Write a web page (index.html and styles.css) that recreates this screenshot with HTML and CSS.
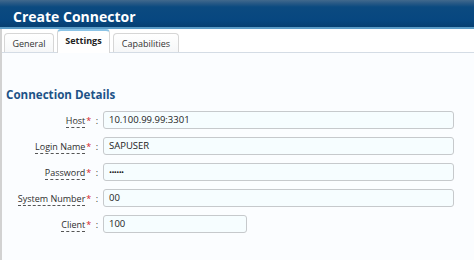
FILE: index.html
```html
<!DOCTYPE html>
<html>
<head>
<meta charset="utf-8">
<link rel="stylesheet" href="styles.css">
</head>
<body>
<div class="dialog">
  <div class="titlebar">Create Connector</div>
  <div class="body">
    <div class="tabs">
      <div class="tab">General</div>
      <div class="tab active">Settings</div>
      <div class="tab">Capabilities</div>
    </div>
    <div class="content">
      <h2 class="section">Connection Details</h2>
      <div class="form">
        <div class="row">
          <div class="label"><span class="lt">Host</span><span class="req">*</span> :</div>
          <div class="input">10.100.99.99:3301</div>
        </div>
        <div class="row">
          <div class="label"><span class="lt">Login Name</span><span class="req">*</span> :</div>
          <div class="input">SAPUSER</div>
        </div>
        <div class="row">
          <div class="label"><span class="lt">Password</span><span class="req">*</span> :</div>
          <div class="input pw">••••••</div>
        </div>
        <div class="row">
          <div class="label"><span class="lt">System Number</span><span class="req">*</span> :</div>
          <div class="input">00</div>
        </div>
        <div class="row">
          <div class="label"><span class="lt">Client</span><span class="req">*</span> :</div>
          <div class="input short">100</div>
        </div>
      </div>
    </div>
  </div>
</div>
</body>
</html>
```
FILE: styles.css
```css
html, body {
  margin: 0;
  padding: 0;
  background: #ffffff;
}
body {
  font-family: "Open Sans", "Noto Sans", sans-serif;
  width: 474px;
  height: 260px;
  overflow: hidden;
}
.dialog {
  display: flex;
  flex-direction: column;
  height: 260px;
}
.titlebar {
  height: 29px;
  box-sizing: border-box;
  padding: 7px 0 0 13px;
  color: #ffffff;
  font-size: 14px;
  font-weight: 700;
  line-height: 19px;
  background: linear-gradient(to bottom, #41698d 0px, #2a5a86 3px, #0b4a80 7px, #074780 20px, #063d6d 29px);
  border-bottom: 2px solid #5b9cc6;
}
.body {
  flex: 1;
  border-left: 2px solid #d2d2d2;
  background: #fbfdff;
  display: flex;
  flex-direction: column;
}
.tabs {
  display: flex;
  align-items: flex-end;
  gap: 3px;
  padding: 0 0 0 2px;
  height: 23px;
  background: #ffffff;
  border-bottom: 1px solid #d4dce5;
}
.tab {
  height: 19px;
  box-sizing: border-box;
  padding: 2px 0 0 0;
  text-align: center;
  font-size: 9px;
  line-height: 16px;
  color: #333333;
  border: 1px solid #d6d6d6;
  border-bottom: none;
  border-radius: 4px 4px 0 0;
  background: linear-gradient(#ffffff, #f6f7f8);
}
.tab:first-child { width: 50px; }
.tab.active {
  font-weight: 700;
  color: #222222;
  padding-top: 2px;
  border-top: 2px solid #8cc4e6;
  background: #ffffff;
  margin-bottom: -1px;
  height: 24px;
  width: 53px;
}
.tab:last-child { width: 66px; }
.content {
  padding: 34px 0 0 4px;
}
.section {
  margin: 0 0 8px 0;
  font-size: 11.6px;
  font-weight: 700;
  line-height: 16px;
  color: #1e5387;
}
.form {
  display: flex;
  flex-direction: column;
  gap: 8px;
}
.row {
  display: flex;
  align-items: center;
  gap: 5px;
}
.label {
  width: 92px;
  text-align: right;
  font-size: 9px;
  color: #2e2e2e;
  white-space: nowrap;
}
.lt {
  border-bottom: 1px dashed #555555;
}
.req {
  color: #d3232a;
  margin-left: 1px;
  margin-right: 2px;
}
.input {
  width: 351px;
  height: 18px;
  box-sizing: border-box;
  border: 1px solid #c6c9cc;
  border-radius: 3px;
  background: #f6fdff;
  font-size: 9.5px;
  line-height: 16px;
  padding-left: 5px;
  color: #222222;
}
.input.pw {
  font-size: 8px;
  letter-spacing: -0.6px;
}
.input.short {
  width: 144px;
}
```
